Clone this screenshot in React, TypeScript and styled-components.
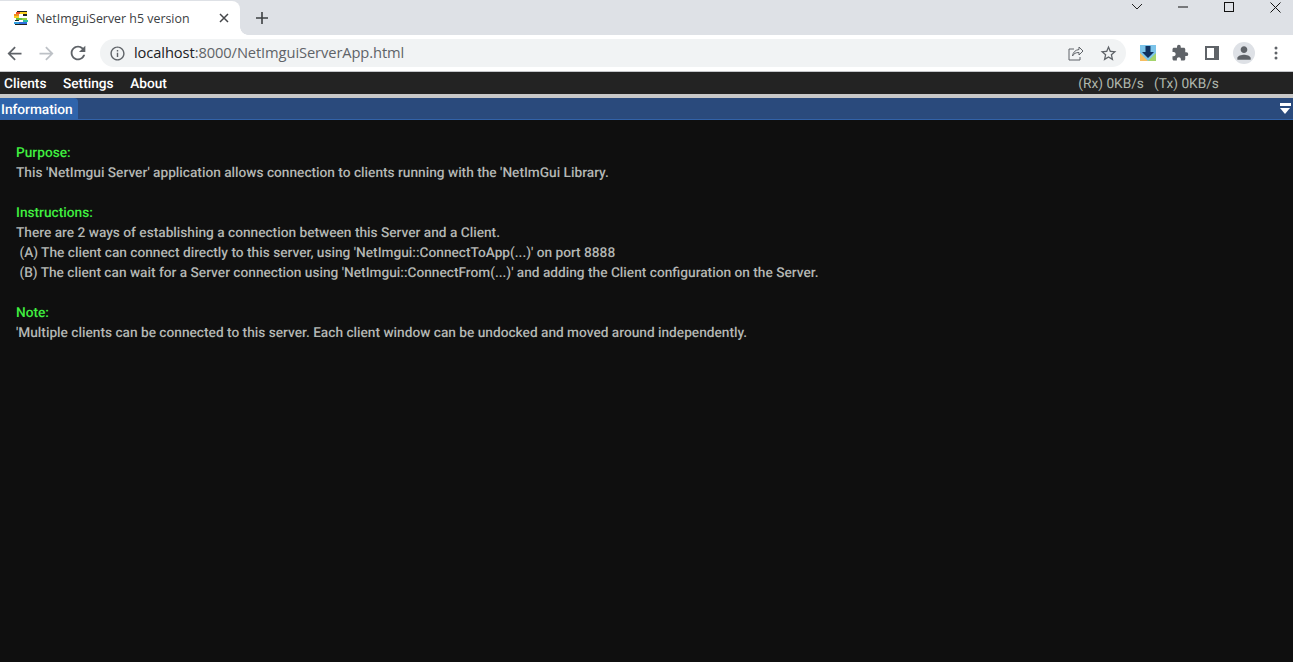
import { createGlobalStyle, styled } from "styled-components";
import {
  MdArrowBack,
  MdArrowForward,
  MdExtension,
  MdInfoOutline,
  MdPerson,
  MdRefresh,
  MdStarBorder,
} from "react-icons/md";

const GlobalStyle = createGlobalStyle`
  html, body {
    margin: 0;
    padding: 0;
    height: 100%;
    overflow: hidden;
    background: #0f0f0f;
  }
  #root {
    height: 100%;
  }
`;

const Page = styled.div`
  width: 1293px;
  height: 662px;
  display: flex;
  flex-direction: column;
  overflow: hidden;
`;

// browser chrome
const TabStrip = styled.div`
  height: 35px;
  background: #dee1e6;
  display: flex;
  align-items: flex-end;
  flex-shrink: 0;
`;

const Tab = styled.div`
  position: relative;
  width: 240px;
  height: 34px;
  background: #ffffff;
  border-radius: 0 8px 0 0;
  display: flex;
  align-items: center;
  padding: 0 11px 0 14px;
  box-sizing: border-box;

  &::after {
    content: "";
    position: absolute;
    right: -8px;
    bottom: 0;
    width: 8px;
    height: 8px;
    background: radial-gradient(circle at 100% 0, #dee1e6 7.5px, #ffffff 8px);
  }
`;

const TabTitle = styled.span`
  font: 12.4px "Open Sans", "Noto Sans", sans-serif;
  color: #3c4043;
  margin-left: 8px;
  flex: 1;
  white-space: nowrap;
`;

const NewTab = styled.div`
  width: 44px;
  height: 34px;
  display: flex;
  align-items: center;
  justify-content: center;
`;

const WindowControls = styled.div`
  margin-left: auto;
  align-self: flex-start;
  display: flex;
  height: 14px;
  align-items: center;
`;

const WindowButton = styled.div<{ $w: number }>`
  width: ${(p) => p.$w}px;
  display: flex;
  justify-content: center;

  &:last-child {
    justify-content: flex-end;
    padding-right: 12px;
    box-sizing: border-box;
  }
`;

const Toolbar = styled.div`
  height: 36px;
  background: #ffffff;
  display: flex;
  align-items: center;
  gap: 4px;
  border-bottom: 1px solid #c4c6ca;
  flex-shrink: 0;
`;

const NavButton = styled.div<{ $w?: number }>`
  width: ${(p) => p.$w ?? 32}px;
  height: 28px;
  display: flex;
  align-items: center;
  justify-content: center;
  flex-shrink: 0;
`;

const Omnibox = styled.div`
  width: 1026px;
  height: 28px;
  background: #f1f3f4;
  border-radius: 14px;
  display: flex;
  align-items: center;
  margin-left: 4px;
  padding: 0 2px 0 9px;
  box-sizing: border-box;
  flex-shrink: 0;
`;

const Url = styled.span`
  font: 14.7px "Open Sans", "Noto Sans", sans-serif;
  color: #5f6368;
  margin-left: 8px;
  padding-bottom: 2px;
  flex: 1;
  letter-spacing: -0.1px;
`;

const UrlHost = styled.span`
  color: #202124;
`;

const Extensions = styled.div`
  display: flex;
  align-items: center;
  margin-left: 2px;
`;

const Avatar = styled.div`
  width: 22px;
  height: 22px;
  border-radius: 50%;
  background: #dee1e6;
  display: flex;
  align-items: center;
  justify-content: center;
`;

// imgui app
const MenuBar = styled.div`
  height: 21px;
  padding: 1px 0 0 4px;
  background: #232323;
  display: flex;
  align-items: center;
  flex-shrink: 0;
  font: 500 13.7px Roboto, sans-serif;
  text-rendering: geometricPrecision;
  color: #ffffff;
`;

const MenuItem = styled.span`
  margin-right: 16.5px;
`;

const Rates = styled.span`
  margin-left: 895px;
  color: #b0b8ae;
  font-weight: 400;
  white-space: pre;
`;

const Separator = styled.div`
  height: 4px;
  background: #c8c8c8;
  flex-shrink: 0;
`;

const DockBar = styled.div`
  height: 21px;
  background: #2a4a7c;
  border-bottom: 1px solid #3262a8;
  display: flex;
  align-items: flex-end;
  justify-content: space-between;
  flex-shrink: 0;
`;

const DockTab = styled.div`
  height: 21px;
  width: 78px;
  box-sizing: border-box;
  padding-left: 1px;
  background: #2f64ab;
  border-radius: 0 4px 0 0;
  font: 500 13.7px/24px Roboto, sans-serif;
  text-rendering: geometricPrecision;
  color: #ffffff;
`;

const DockMenu = styled.div`
  width: 11px;
  margin-right: 2px;
  align-self: center;
  display: flex;
  flex-direction: column;
  gap: 2px;
`;

const DockMenuBar = styled.div`
  height: 3px;
  background: #ffffff;
`;

const DockMenuArrow = styled.div`
  width: 0;
  height: 0;
  border-left: 5.5px solid transparent;
  border-right: 5.5px solid transparent;
  border-top: 6px solid #ffffff;
`;

const Content = styled.div`
  flex: 1;
  background: #0f0f0f;
  padding: 23px 16px 0;
  font: 500 13.7px/20px Roboto, sans-serif;
  text-rendering: geometricPrecision;
  color: #b4b7b4;
`;

const Heading = styled.div`
  color: #40f040;
`;

const Line = styled.div`
  white-space: pre;
`;

const Gap = styled.div`
  height: 20px;
`;

const Favicon = () => (
  <svg width="14" height="15" viewBox="0 0 14 15">
    <rect x="3" y="0" width="10" height="1" fill="#222" />
    <rect x="2" y="1" width="4" height="2" fill="#f0502a" />
    <rect x="6" y="1" width="7" height="2" fill="#f8d020" />
    <rect x="0" y="3" width="5" height="2" fill="#f09020" />
    <rect x="9" y="3" width="4" height="2" fill="#222" />
    <rect x="0" y="5" width="5" height="2" fill="#f8d020" />
    <rect x="2" y="7" width="6" height="2" fill="#60c040" />
    <rect x="8" y="7" width="5" height="2" fill="#90d040" />
    <rect x="1" y="9" width="4" height="1" fill="#222" />
    <rect x="9" y="9" width="5" height="2" fill="#30c0a0" />
    <rect x="0" y="11" width="5" height="2" fill="#30a0e0" />
    <rect x="5" y="11" width="8" height="2" fill="#3070e0" />
    <rect x="1" y="13" width="12" height="1" fill="#222" />
  </svg>
);

const App = () => {
  return (
    <>
      <GlobalStyle />
      <Page>
        <TabStrip>
          <Tab>
            <Favicon />
            <TabTitle>NetImguiServer h5 version</TabTitle>
            <svg width="10" height="10" viewBox="0 0 10 10">
              <path d="M1 1l8 8M9 1l-8 8" stroke="#45474a" strokeWidth="1.5" />
            </svg>
          </Tab>
          <NewTab>
            <svg width="12" height="12" viewBox="0 0 12 12">
              <path d="M6 0v12M0 6h12" stroke="#3c4043" strokeWidth="1.6" />
            </svg>
          </NewTab>
          <WindowControls>
            <WindowButton $w={46}>
              <svg width="12" height="8" viewBox="0 0 12 8">
                <path d="M1 1l5 5 5-5" stroke="#222" fill="none" />
              </svg>
            </WindowButton>
            <WindowButton $w={46}>
              <svg width="10" height="2" viewBox="0 0 10 2">
                <path d="M0 1h10" stroke="#111" />
              </svg>
            </WindowButton>
            <WindowButton $w={46}>
              <svg width="10" height="10" viewBox="0 0 10 10">
                <rect x="0.5" y="0.5" width="9" height="9" stroke="#111" fill="none" />
              </svg>
            </WindowButton>
            <WindowButton $w={41}>
              <svg width="11" height="11" viewBox="0 0 11 11">
                <path d="M0.5 0.5l10 10M10.5 0.5l-10 10" stroke="#111" />
              </svg>
            </WindowButton>
          </WindowControls>
        </TabStrip>
        <Toolbar>
          <NavButton $w={28}>
            <MdArrowBack size={21} color="#5f6368" />
          </NavButton>
          <NavButton $w={28}>
            <MdArrowForward size={21} color="#bdc1c6" />
          </NavButton>
          <NavButton $w={28}>
            <MdRefresh size={22} color="#5f6368" />
          </NavButton>
          <Omnibox>
            <MdInfoOutline size={17} color="#5f6368" />
            <Url>
              <UrlHost>localhost</UrlHost>:8000/NetImguiServerApp.html
            </Url>
            <NavButton>
              <svg width="16" height="15" viewBox="0 0 16 15">
                <path d="M11 1l4 4-4 4V6.500C7.500 6.500 6 7.500 4.500 10 5 6.500 7 4 11 3.500z" stroke="#5f6368" fill="none" />
                <path d="M6 3H1v11h11v-3" stroke="#5f6368" fill="none" />
              </svg>
            </NavButton>
            <NavButton>
              <MdStarBorder size={19} color="#5f6368" />
            </NavButton>
          </Omnibox>
          <Extensions>
            <NavButton>
              <svg width="16" height="16" viewBox="0 0 16 16">
                <rect width="16" height="16" fill="#7cc4ea" />
                <path d="M0 8l8 8H0z" fill="#f6bd60" />
                <path d="M16 8l-8 8h8z" fill="#a4d46c" />
                <path d="M5.500 1h5v6H14l-6 6-6-6h3.500z" fill="#10305f" />
              </svg>
            </NavButton>
            <NavButton>
              <MdExtension size={18} color="#5f6368" />
            </NavButton>
            <NavButton>
              <svg width="14" height="14" viewBox="0 0 14 14">
                <rect x="1" y="1" width="12" height="12" stroke="#5f6368" strokeWidth="2" fill="none" />
                <rect x="9" y="1" width="4" height="12" fill="#5f6368" />
              </svg>
            </NavButton>
            <NavButton>
              <Avatar>
                <MdPerson size={20} color="#5f6368" />
              </Avatar>
            </NavButton>
            <NavButton>
              <svg width="4" height="14" viewBox="0 0 4 14">
                <circle cx="2" cy="2" r="1.500" fill="#5f6368" />
                <circle cx="2" cy="7" r="1.500" fill="#5f6368" />
                <circle cx="2" cy="12" r="1.500" fill="#5f6368" />
              </svg>
            </NavButton>
          </Extensions>
        </Toolbar>
        <MenuBar>
          <MenuItem>Clients</MenuItem>
          <MenuItem>Settings</MenuItem>
          <MenuItem>About</MenuItem>
          <Rates>(Rx) 0KB/s   (Tx) 0KB/s</Rates>
        </MenuBar>
        <Separator />
        <DockBar>
          <DockTab>Information</DockTab>
          <DockMenu>
            <DockMenuBar />
            <DockMenuArrow />
          </DockMenu>
        </DockBar>
        <Content>
          <Heading>Purpose:</Heading>
          <Line>This 'NetImgui Server' application allows connection to clients running with the 'NetImGui Library.</Line>
          <Gap />
          <Heading>Instructions:</Heading>
          <Line>There are 2 ways of establishing a connection between this Server and a Client.</Line>
          <Line> (A) The client can connect directly to this server, using 'NetImgui::ConnectToApp(...)' on port 8888</Line>
          <Line> (B) The client can wait for a Server connection using 'NetImgui::ConnectFrom(...)' and adding the Client configuration on the Server.</Line>
          <Gap />
          <Heading>Note:</Heading>
          <Line>'Multiple clients can be connected to this server. Each client window can be undocked and moved around independently.</Line>
        </Content>
      </Page>
    </>
  );
};

export default App;
